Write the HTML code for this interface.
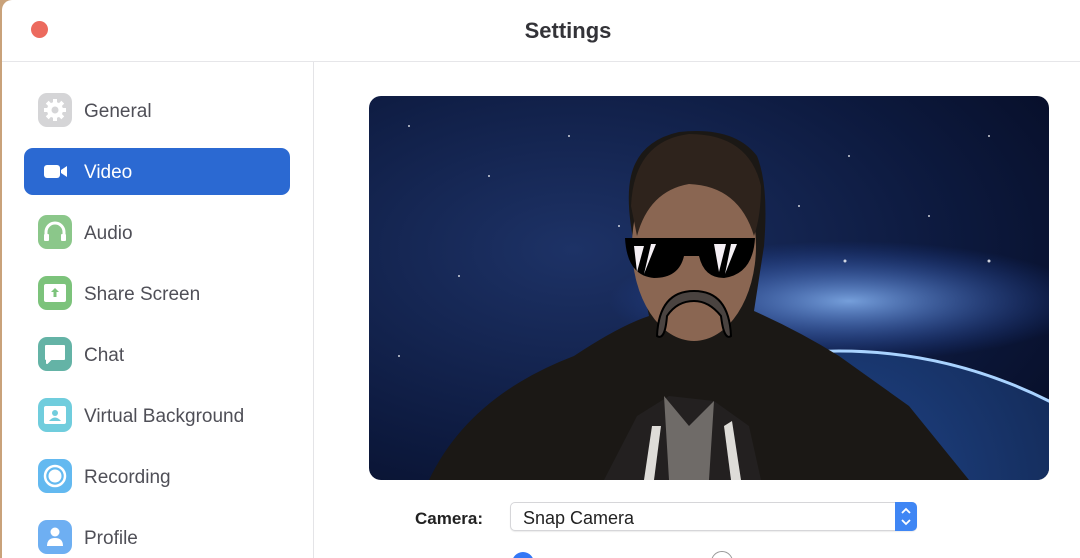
<!DOCTYPE html>
<html><head><meta charset="utf-8"><style>
*{margin:0;padding:0;box-sizing:border-box}
html,body{width:1080px;height:558px;overflow:hidden}
body{background:#c9a27a;font-family:"Liberation Sans",sans-serif;position:relative}
.win{position:absolute;left:2px;top:0;width:1078px;height:558px;background:#fff;border-radius:10px 0 0 0;overflow:hidden}
.hdr{position:absolute;left:0;top:0;width:100%;height:62px;border-bottom:1px solid #e6e6e9}
.dot{position:absolute;left:29px;top:21px;width:17px;height:17px;border-radius:50%;background:#ec6a5e}
.title{position:absolute;left:466px;width:200px;top:18px;text-align:center;font-size:22px;font-weight:bold;color:#333338}
.side{position:absolute;left:0;top:62px;width:312px;height:496px;border-right:1px solid #e4e4e7}
.item{position:absolute;left:22px;width:266px;height:47px;border-radius:9px}
.item.sel{background:#2b69d2}
.ic{position:absolute;left:14px;top:6px;width:34px;height:34px;border-radius:9px}
.lb{position:absolute;left:60px;top:14px;font-size:19px;color:#4f4f57}
.sel .lb{color:#fff}
.prev{position:absolute;left:369px;top:96px;width:680px;height:384px;border-radius:12px;overflow:hidden}
.cam{position:absolute;left:415px;top:509px;font-size:17px;font-weight:bold;color:#222}
.sel2{position:absolute;left:510px;top:502px;width:407px;height:29px;border:1px solid #d6d6d9;border-radius:5px;background:#fff;box-shadow:0 1px 1px rgba(0,0,0,.08)}
.sel2 span{position:absolute;left:12px;top:5px;font-size:18px;color:#222}
.arr{position:absolute;right:-1px;top:-1px;width:22px;height:29px;background:#3f86f4;border-radius:0 5px 5px 0}
</style></head><body>
<div class="win">
<div class="hdr"><div class="dot"></div><div class="title">Settings</div></div>
<div class="side">
 <div class="item" style="top:25px"><div class="ic" style="background:#d5d5d7"><svg width="34" height="34"><g fill="#fff"><circle cx="17" cy="17" r="8"/><g stroke="#fff" stroke-width="4"><path d="M17 6V28M6 17H28M9.2 9.2L24.8 24.8M24.8 9.2L9.2 24.8"/></g></g><circle cx="17" cy="17" r="3.5" fill="#d5d5d7"/></svg></div><div class="lb">General</div></div>
 <div class="item sel" style="top:86px"><svg style="position:absolute;left:20px;top:16px" width="24" height="15"><rect x="0" y="1" width="16" height="13" rx="3" fill="#fff"/><path d="M17 6 L23 2 V13 L17 9Z" fill="#fff"/></svg><div class="lb">Video</div></div>
 <div class="item" style="top:147px"><div class="ic" style="background:#8bc78a"><svg width="34" height="34"><path d="M8 23 V17 A9 9 0 0 1 26 17 V23" stroke="#fff" stroke-width="3" fill="none"/><rect x="6" y="19" width="5" height="7" rx="1" fill="#fff"/><rect x="23" y="19" width="5" height="7" rx="1" fill="#fff"/></svg></div><div class="lb">Audio</div></div>
 <div class="item" style="top:208px"><div class="ic" style="background:#7cc37b"><svg width="34" height="34"><rect x="6" y="8" width="22" height="18" rx="2" fill="#fff"/><path d="M17 12 L13 16 H15.5 V21 H18.5 V16 H21Z" fill="#7cc37b"/></svg></div><div class="lb">Share Screen</div></div>
 <div class="item" style="top:269px"><div class="ic" style="background:#64b3a6"><svg width="34" height="34"><path d="M8 9 H26 V22 H13 L9 26 V22 H8Z" fill="#fff" stroke="#fff" stroke-linejoin="round" stroke-width="2"/></svg></div><div class="lb">Chat</div></div>
 <div class="item" style="top:330px"><div class="ic" style="background:#70cddd"><svg width="34" height="34"><rect x="6" y="8" width="22" height="18" rx="2" fill="#fff"/><circle cx="17" cy="15" r="3" fill="#70cddd"/><path d="M11 23 Q17 16 23 23Z" fill="#70cddd"/></svg></div><div class="lb">Virtual Background</div></div>
 <div class="item" style="top:391px"><div class="ic" style="background:#63b9f0"><svg width="34" height="34"><circle cx="17" cy="17" r="10" fill="none" stroke="#fff" stroke-width="2.5"/><circle cx="17" cy="17" r="6.5" fill="#fff"/></svg></div><div class="lb">Recording</div></div>
 <div class="item" style="top:452px"><div class="ic" style="background:#6eaff2"><svg width="34" height="34"><circle cx="17" cy="12" r="4.5" fill="#fff"/><path d="M9 26 Q9 18 17 18 Q25 18 25 26Z" fill="#fff"/></svg></div><div class="lb">Profile</div></div>
</div>
<div style="position:absolute;left:510px;top:552px;width:22px;height:22px;border-radius:50%;background:#3478f6"></div>
<div style="position:absolute;left:709px;top:551px;width:22px;height:22px;border-radius:50%;border:1px solid #999;background:#fff"></div>
</div>
<div class="prev"><svg width="680" height="384">
<defs>
<radialGradient id="sky" cx="0.3" cy="0.4" r="0.9"><stop offset="0" stop-color="#1d3266"/><stop offset="0.6" stop-color="#0d1a3f"/><stop offset="1" stop-color="#060c24"/></radialGradient>
<radialGradient id="glow" cx="0.5" cy="0.5" r="0.5"><stop offset="0" stop-color="#8fbfff" stop-opacity=".8"/><stop offset="1" stop-color="#2a5bd6" stop-opacity="0"/></radialGradient>
<radialGradient id="earth" cx="0.5" cy="0.15" r="0.6"><stop offset="0" stop-color="#1f4488"/><stop offset="1" stop-color="#050b1c"/></radialGradient>
</defs>
<rect width="680" height="384" fill="url(#sky)"/>
<ellipse cx="480" cy="205" rx="240" ry="60" fill="url(#glow)"/>
<circle cx="470" cy="720" r="465" fill="url(#earth)" stroke="#a9d3ff" stroke-width="3"/>
<g fill="#fff" opacity=".8"><circle cx="40" cy="30" r="1"/><circle cx="120" cy="80" r="1"/><circle cx="200" cy="40" r="1"/><circle cx="90" cy="180" r="1"/><circle cx="30" cy="260" r="1"/><circle cx="160" cy="300" r="1"/><circle cx="480" cy="60" r="1"/><circle cx="560" cy="120" r="1"/><circle cx="620" cy="40" r="1"/><circle cx="476" cy="165" r="1.5"/><circle cx="620" cy="165" r="1.5"/><circle cx="430" cy="110" r="1"/><circle cx="250" cy="130" r="1"/></g>
<path d="M205 260 Q250 230 280 220 L270 170 Q255 110 262 80 Q270 45 310 36 Q365 30 388 60 Q400 90 395 150 L385 215 Q430 235 470 260 L540 310 L600 384 H60 Q100 300 205 260Z" fill="#1b1815"/>
<ellipse cx="325" cy="150" rx="62" ry="95" fill="#8a6652"/>
<path d="M262 110 Q265 45 320 38 Q380 38 392 90 Q392 120 385 140 Q370 90 320 88 Q280 95 268 140Z" fill="#2e231c"/>
<path d="M235 384 L268 320 L300 300 L345 305 L380 330 L392 384Z" fill="#232020"/>
<path d="M295 300 L320 330 L345 305 L340 384 L300 384Z" fill="#6f6b68"/>
<path d="M283 330 L275 384 H285 L292 330Z" fill="#dedcd8"/><path d="M355 330 L362 384 H372 L363 325Z" fill="#dedcd8"/>
<path d="M256 142 H386 Q384 178 355 182 Q335 182 330 160 H315 Q310 182 285 182 Q258 180 256 142Z" fill="#000"/>
<path d="M265 150 L275 150 L268 176Z M282 148 L287 148 L275 178Z M345 148 L357 148 L350 176Z M362 148 L368 148 L356 178Z" fill="#f5f0f5"/>
<path d="M288 240 Q290 195 325 195 Q360 195 362 240 Q355 245 352 220 Q340 205 325 205 Q308 205 298 220 Q296 245 288 240Z" fill="#4a4340" stroke="#000" stroke-width="2"/>
</svg></div>
<div class="cam">Camera:</div>
<div class="sel2"><span>Snap Camera</span><div class="arr"><svg width="22" height="29"><path d="M7 11 L11 7 L15 11 M7 18 L11 22 L15 18" stroke="#fff" stroke-width="1.8" fill="none"/></svg></div></div>
</body></html>
